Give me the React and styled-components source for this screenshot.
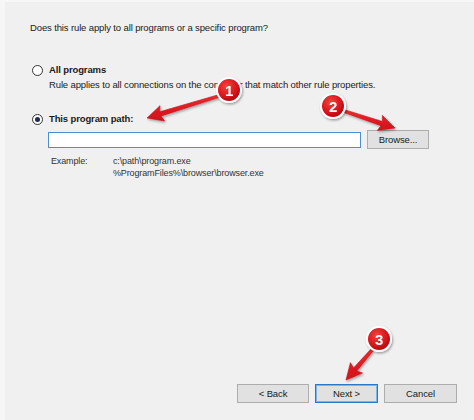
import React from "react";
import styled, { createGlobalStyle } from "styled-components";

const GlobalStyle = createGlobalStyle`
  html, body {
    margin: 0;
    padding: 0;
    background: #f0f0f0;
  }
  body {
    font-family: "Liberation Sans", Arial, sans-serif;
    color: #1a1a1a;
    letter-spacing: -0.13px;
  }
`;

const Page = styled.div`
  position: relative;
  width: 474px;
  height: 420px;
  box-sizing: border-box;
  background: #f0f0f0;
  border-left: 5px solid #f6f6f6;
  border-top: 2px solid #f7f7f7;
  display: flex;
  flex-direction: column;
  overflow: hidden;
`;

const Question = styled.div`
  margin: 20px 0 0 25px;
  font-size: 9.5px;
  line-height: 12px;
`;

const Options = styled.div`
  margin: 30px 0 0 27px;
  display: flex;
  flex-direction: column;
`;

const OptionRow = styled.label`
  display: flex;
  align-items: center;
  gap: 6px;
  margin-top: ${(p) => p.top || 0}px;
`;

const Radio = styled.span`
  width: 9px;
  height: 9px;
  border-radius: 50%;
  border: 1px solid #333;
  background: #fff;
  display: flex;
  align-items: center;
  justify-content: center;

  &:after {
    content: "";
    display: ${(p) => (p.checked ? "block" : "none")};
    width: 5px;
    height: 5px;
    border-radius: 50%;
    background: #202a55;
  }
`;

const OptionLabel = styled.span`
  font-size: 9.5px;
  font-weight: bold;
  line-height: 12px;
`;

const Description = styled.div`
  margin: 3px 0 0 17px;
  font-size: 9.5px;
  line-height: 12px;
  color: #222;
`;

const PathRow = styled.div`
  display: flex;
  align-items: center;
  gap: 6px;
  margin: 5px 0 0 16px;
`;

const PathInput = styled.div`
  width: 313px;
  height: 16px;
  box-sizing: border-box;
  background: #fff;
  border: 1px solid #4a8fd6;
`;

const Button = styled.div`
  box-sizing: border-box;
  width: ${(p) => p.w}px;
  height: 19px;
  display: flex;
  align-items: center;
  justify-content: center;
  background: #e1e1e1;
  border: 1px solid ${(p) => (p.primary ? "#2a78c8" : "#adadad")};
  box-shadow: ${(p) => (p.primary ? "inset 0 0 0 1px #7fb4e6" : "none")};
  font-size: 9.5px;
  color: #1a1a1a;
`;

const ExampleGrid = styled.div`
  display: grid;
  grid-template-columns: 62px auto;
  margin: 6px 0 0 19px;
  font-size: 9px;
  line-height: 12px;
  color: #333;
`;

const Footer = styled.div`
  margin-top: auto;
  display: flex;
  justify-content: flex-end;
  gap: 6px;
  padding: 0 17px 17px 0;
`;

const Overlay = styled.svg`
  position: absolute;
  left: -5px;
  top: -2px;
  pointer-events: none;
`;

function arrowPoints(x1, y1, x2, y2) {
  const dx = x2 - x1;
  const dy = y2 - y1;
  const len = Math.hypot(dx, dy);
  const ux = dx / len;
  const uy = dy / len;
  const nx = -uy;
  const ny = ux;
  const head = 14;
  const hw = 8;
  const sw = 2.2;
  const bx = x2 - ux * head;
  const by = y2 - uy * head;
  const pts = [
    [x1 + nx * 1.4, y1 + ny * 1.4],
    [bx + nx * sw, by + ny * sw],
    [bx + nx * hw - ux * 2, by + ny * hw - uy * 2],
    [x2, y2],
    [bx - nx * hw - ux * 2, by - ny * hw - uy * 2],
    [bx - nx * sw, by - ny * sw],
    [x1 - nx * 1.4, y1 - ny * 1.4],
  ];
  return pts.map((p) => p.map((v) => v.toFixed(1)).join(",")).join(" ");
}

const Arrow = ({ from, to }) => (
  <polygon
    points={arrowPoints(from[0], from[1], to[0], to[1])}
    fill="url(#arrowGrad)"
    stroke="#c8101a"
    strokeWidth="0.6"
    filter="url(#shadow)"
  />
);

const Badge = ({ cx, cy, n }) => (
  <g filter="url(#shadow)">
    <circle cx={cx} cy={cy} r="12" fill="url(#badgeGrad)" stroke="#fff" strokeWidth="2" />
    <text
      x={cx}
      y={cy + 5.5}
      textAnchor="middle"
      fontFamily="Liberation Sans, Arial, sans-serif"
      fontWeight="bold"
      fontSize="15"
      fill="#fff"
    >
      {n}
    </text>
  </g>
);

const callouts = [
  { n: 1, badge: [229, 90], from: [219, 96], to: [147, 118] },
  { n: 2, badge: [333, 106], from: [344, 111], to: [395, 128] },
  { n: 3, badge: [379, 339], from: [372, 350], to: [346, 380] },
];

export default function App() {
  return (
    <>
      <GlobalStyle />
      <Page>
        <Question>Does this rule apply to all programs or a specific program?</Question>
        <Options>
          <OptionRow>
            <Radio />
            <OptionLabel>All programs</OptionLabel>
          </OptionRow>
          <Description>
            Rule applies to all connections on the computer that match other rule properties.
          </Description>
          <OptionRow top={22}>
            <Radio checked />
            <OptionLabel>This program path:</OptionLabel>
          </OptionRow>
          <PathRow>
            <PathInput />
            <Button w={62}>Browse...</Button>
          </PathRow>
          <ExampleGrid>
            <span>Example:</span>
            <span>c:\path\program.exe</span>
            <span />
            <span>%ProgramFiles%\browser\browser.exe</span>
          </ExampleGrid>
        </Options>
        <Footer>
          <Button w={72}>&lt; Back</Button>
          <Button w={63} primary>
            Next &gt;
          </Button>
          <Button w={73}>Cancel</Button>
        </Footer>
        <Overlay width="474" height="420" viewBox="0 0 474 420">
          <defs>
            <radialGradient id="badgeGrad" cx="40%" cy="35%" r="70%">
              <stop offset="0%" stopColor="#f2453f" />
              <stop offset="60%" stopColor="#d8141c" />
              <stop offset="100%" stopColor="#a50a10" />
            </radialGradient>
            <linearGradient id="arrowGrad" x1="0" y1="0" x2="0" y2="1">
              <stop offset="0%" stopColor="#f0282c" />
              <stop offset="100%" stopColor="#d0101a" />
            </linearGradient>
            <filter id="shadow" x="-30%" y="-30%" width="160%" height="160%">
              <feDropShadow dx="1" dy="1.5" stdDeviation="1.2" floodColor="#000" floodOpacity="0.35" />
            </filter>
          </defs>
          {callouts.map((c) => (
            <g key={c.n}>
              <Arrow from={c.from} to={c.to} />
              <Badge cx={c.badge[0]} cy={c.badge[1]} n={c.n} />
            </g>
          ))}
        </Overlay>
      </Page>
    </>
  );
}
